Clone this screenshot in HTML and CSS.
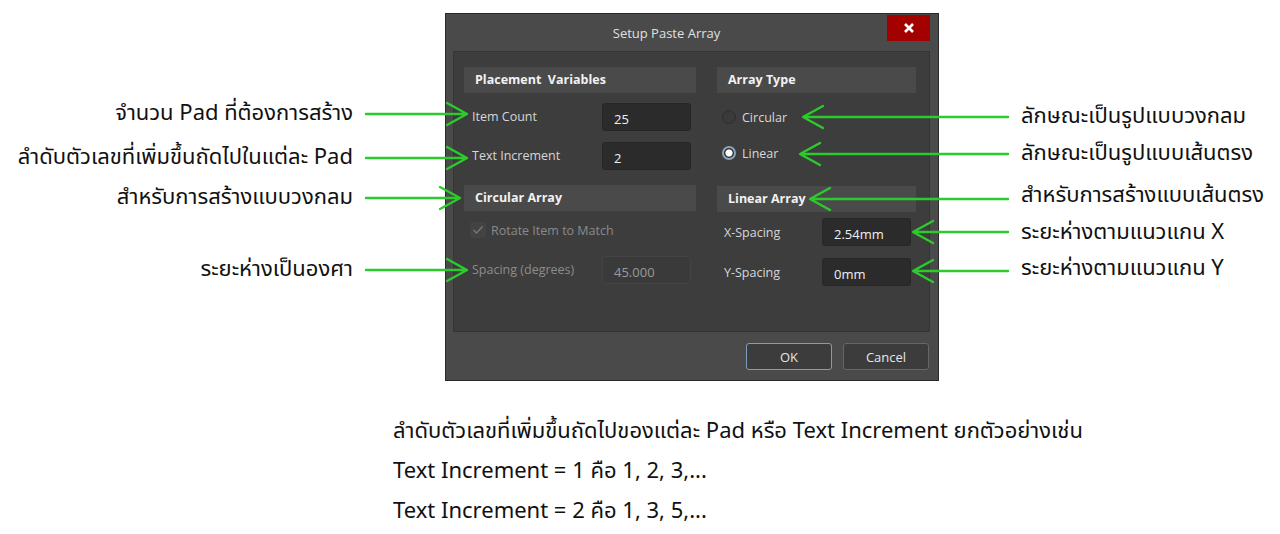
FILE: index.html
```html
<!DOCTYPE html>
<html lang="th">
<head>
    <meta charset="UTF-8">
    <meta name="viewport" content="width=device-width, initial-scale=1.0">
    <title>Setup Paste Array</title>
    <link rel="stylesheet" href="styles.css">
</head>
<body>
    <div class="figure">
        <div class="notes notes-left">
            <div class="note">จำนวน Pad ที่ต้องการสร้าง</div>
            <div class="note">ลำดับตัวเลขที่เพิ่มขึ้นถัดไปในแต่ละ Pad</div>
            <div class="note">สำหรับการสร้างแบบวงกลม</div>
            <div class="note">ระยะห่างเป็นองศา</div>
        </div>

        <div class="dialog">
            <div class="titlebar">
                <span class="title">Setup Paste Array</span>
                <button class="close">
                    <svg width="12" height="12" viewBox="0 0 12 12"><path d="M2 2 L10 10 M10 2 L2 10" stroke="#fff" stroke-width="2.6"/></svg>
                </button>
            </div>

            <div class="panel">
                <div class="col col-left">
                    <div class="group-head">Placement&nbsp; Variables</div>
                    <div class="row row-first">
                        <span class="label">Item Count</span>
                        <span class="field">25</span>
                    </div>
                    <div class="row">
                        <span class="label">Text Increment</span>
                        <span class="field">2</span>
                    </div>
                    <div class="group-head group-gap">Circular Array</div>
                    <div class="check disabled">
                        <span class="box">
                            <svg width="12" height="10" viewBox="0 0 12 10"><path d="M1.5 5 L4.5 8 L10.5 1.5" fill="none" stroke="#777" stroke-width="1.4"/></svg>
                        </span>
                        <span>Rotate Item to Match</span>
                    </div>
                    <div class="row disabled">
                        <span class="label">Spacing (degrees)</span>
                        <span class="field">45.000</span>
                    </div>
                </div>

                <div class="col col-right">
                    <div class="group-head">Array Type</div>
                    <div class="radio radio-first">
                        <span class="dot"></span>
                        <span>Circular</span>
                    </div>
                    <div class="radio checked">
                        <span class="dot"></span>
                        <span>Linear</span>
                    </div>
                    <div class="group-head group-gap2">Linear Array</div>
                    <div class="row row-lin">
                        <span class="label">X-Spacing</span>
                        <span class="field">2.54mm</span>
                    </div>
                    <div class="row row-lin2">
                        <span class="label">Y-Spacing</span>
                        <span class="field">0mm</span>
                    </div>
                </div>
            </div>

            <div class="footer">
                <button class="btn btn-ok">OK</button>
                <button class="btn">Cancel</button>
            </div>
        </div>

        <div class="notes notes-right">
            <div class="note">ลักษณะเป็นรูปแบบวงกลม</div>
            <div class="note">ลักษณะเป็นรูปแบบเส้นตรง</div>
            <div class="note">สำหรับการสร้างแบบเส้นตรง</div>
            <div class="note">ระยะห่างตามแนวแกน X</div>
            <div class="note">ระยะห่างตามแนวแกน Y</div>
        </div>

        <!-- callout arrows -->
        <svg class="arrows" width="1280" height="400" viewBox="0 0 1280 400">
            <g fill="none" stroke="#2ccb2c" stroke-width="2.4" stroke-linecap="round" stroke-linejoin="round">
                <path d="M366 114 H466 M447 103 L467 114 L447 125"/>
                <path d="M366 158 H466 M447 147 L467 158 L447 169"/>
                <path d="M366 198 H458 M440 187 L460 198 L440 209"/>
                <path d="M366 270 H466 M447 259 L467 270 L447 281"/>

                <path d="M1008 117 H805 M823 106 L803 117 L823 128"/>
                <path d="M1008 154 H802 M820 143 L800 154 L820 165"/>
                <path d="M1008 199 H812 M830 188 L810 199 L830 210"/>
                <path d="M1008 232 H915 M933 221 L913 232 L933 243"/>
                <path d="M1008 271 H915 M933 260 L913 271 L933 282"/>
            </g>
        </svg>
    </div>

    <div class="caption">
        <p>ลำดับตัวเลขที่เพิ่มขึ้นถัดไปของแต่ละ Pad หรือ Text Increment ยกตัวอย่างเช่น</p>
        <p>Text Increment = 1 คือ 1, 2, 3,...</p>
        <p>Text Increment = 2 คือ 1, 3, 5,...</p>
    </div>
</body>
</html>
```

FILE: styles.css
```css
body, html {
    margin: 0;
    padding: 0;
    background: #fff;
}

body {
    color: #111;
    font-family: "Noto Sans Thai", "Leelawadee UI", Tahoma, "Noto Sans", sans-serif;
    overflow: hidden;
}

.figure {
    position: relative;
    display: flex;
    align-items: flex-start;
    padding-top: 13px;
    height: 375px;
}

/* Thai callouts on both sides */
.notes {
    font-size: 22px;
    line-height: 30px;
    white-space: nowrap;
}

.notes-left {
    width: 353px;
    text-align: right;
}

    .notes-left .note:nth-child(1) { margin-top: 86px; }
    .notes-left .note:nth-child(2) { margin-top: 14px; }
    .notes-left .note:nth-child(3) { margin-top: 10px; }
    .notes-left .note:nth-child(4) { margin-top: 42px; }

.notes-right {
    margin-left: 82px;
}

    .notes-right .note:nth-child(1) { margin-top: 89px; }
    .notes-right .note:nth-child(2) { margin-top: 7px; }
    .notes-right .note:nth-child(3) { margin-top: 12px; }
    .notes-right .note:nth-child(4) { margin-top: 7px; }
    .notes-right .note:nth-child(5) { margin-top: 6px; }

.arrows {
    position: absolute;
    top: 0;
    left: 0;
    pointer-events: none;
}

/* Dialog window */
.dialog {
    margin-left: 92px;
    width: 492px;
    height: 366px;
    background: #4a4a4a;
    border: 1px solid #2a2a2a;
    font-family: "Open Sans", "Noto Sans", sans-serif;
    font-size: 12.5px;
    color: #d6d6d6;
    display: flex;
    flex-direction: column;
}

.titlebar {
    height: 37px;
    display: flex;
    align-items: flex-start;
}

    .titlebar .title {
        flex: 1;
        text-align: center;
        padding-top: 10px;
        font-size: 13px;
        color: #e0e0e0;
    }

.close {
    width: 43px;
    height: 26px;
    margin: 1px 8px 0 0;
    border: none;
    background: #a30000;
    padding: 0;
    display: flex;
    align-items: center;
    justify-content: center;
}

.panel {
    margin: 0 8px 0 7px;
    height: 281px;
    background: #3d3d3d;
    border: 1px solid #353535;
    display: flex;
    padding: 15px 0 0 10px;
    box-sizing: border-box;
}

.col-left {
    width: 232px;
}

.col-right {
    width: 199px;
    margin-left: 21px;
}

.group-head {
    height: 26px;
    line-height: 26px;
    background: #4a4a4a;
    padding-left: 11px;
    font-weight: bold;
    color: #f2f2f2;
}

.group-gap { margin-top: 15px; }
.group-gap2 { margin-top: 25px; }

.row {
    display: flex;
    align-items: flex-start;
    height: 28px;
    margin-top: 11px;
}

.row-first { margin-top: 10px; }

    .row .label {
        width: 130px;
        padding-left: 8px;
        padding-top: 5px;
    }

.field {
    width: 89px;
    height: 28px;
    line-height: 30px;
    box-sizing: border-box;
    background: #2b2b2b;
    border: 1px solid #262626;
    border-radius: 3px;
    padding-left: 11px;
    color: #f0f0f0;
    font-size: 13px;
}

.row.disabled {
    margin-top: 17px;
}

    .row.disabled .label { color: #8c8c8c; }

    .row.disabled .field {
        background: #3a3a3a;
        border-color: #444;
        color: #9a9a9a;
    }

.check {
    display: flex;
    align-items: center;
    margin-top: 10px;
    padding-left: 6px;
    height: 18px;
    color: #8a8a8a;
}

    .check .box {
        width: 16px;
        height: 16px;
        border-radius: 2px;
        background: #434343;
        margin-right: 5px;
        display: flex;
        align-items: center;
        justify-content: center;
    }

.radio {
    display: flex;
    align-items: center;
    height: 16px;
    padding-left: 5px;
    margin-top: 20px;
    color: #d8d8d8;
}

.radio-first { margin-top: 16px; }

    .radio .dot {
        width: 14px;
        height: 14px;
        box-sizing: border-box;
        border-radius: 50%;
        background: #3a3a3a;
        border: 1px solid #2e2e2e;
        margin-right: 6px;
    }

    .radio.checked .dot {
        border: 2px solid #8ea4bb;
        background: radial-gradient(circle, #fff 0 3.2px, #2e2e2e 4px);
    }

.row-lin { margin-top: 6px; }
.row-lin2 { margin-top: 12px; }

    .row-lin .label, .row-lin2 .label {
        width: 98px;
        padding-left: 7px;
        padding-top: 6px;
    }

.footer {
    display: flex;
    justify-content: flex-end;
    gap: 11px;
    padding: 11px 9px 0 0;
}

.btn {
    width: 86px;
    height: 27px;
    background: #3c3c3c;
    border: 1px solid #666;
    border-radius: 3px;
    color: #e6e6e6;
    font-family: "Open Sans", "Noto Sans", sans-serif;
    font-size: 13px;
    padding: 0;
}

.btn-ok {
    border-color: #7e9cbc;
}

/* Explanation under the dialog */
.caption {
    padding-left: 393px;
    padding-top: 24px;
    font-size: 22px;
}

    .caption p {
        margin: 0;
        line-height: 40px;
        white-space: nowrap;
    }
```
